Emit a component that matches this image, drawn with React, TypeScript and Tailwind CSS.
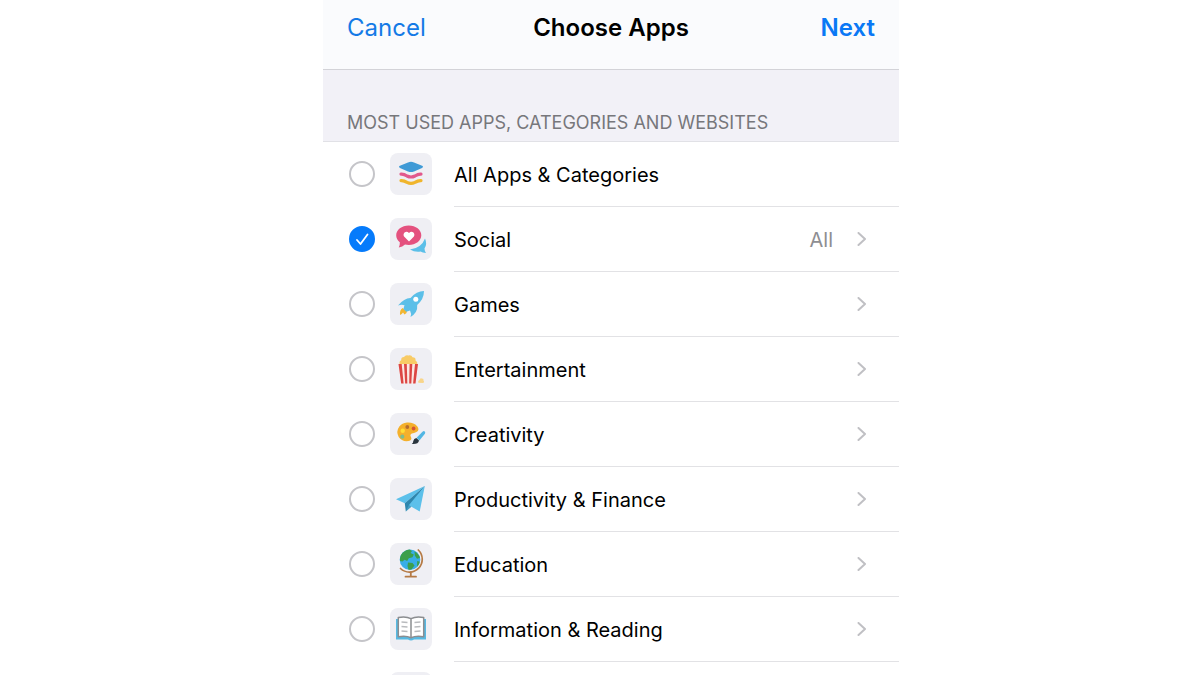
import React, { useState } from 'react';

const LayersIcon = () => (
  <svg viewBox="0 0 42 42" className="w-full h-full">
    <path d="M11 27.6 Q14 27.4 17 29.4 Q21 31.4 25 29.4 Q28 27.4 31 27.6" fill="none" stroke="#f0b52c" strokeWidth="3.2" strokeLinecap="round" />
    <path d="M11 21.2 Q14 21 17 23 Q21 25 25 23 Q28 21 31 21.2" fill="none" stroke="#e2588c" strokeWidth="3.2" strokeLinecap="round" />
    <path d="M9 13.8 Q9 13 10.5 12.6 L18 9.4 Q21 8 24 9.4 L31.5 12.6 Q33 13 33 13.8 Q33 14.6 31.5 15.2 L24 18.4 Q21 19.8 18 18.4 L10.500 15.2 Q9 14.6 9 13.8Z" fill="#3f9ad6" />
  </svg>
);

const SocialIcon = () => (
  <svg viewBox="0 0 42 42" className="w-full h-full">
    <path d="M35 20.500 Q37.500 26 34.500 30.500 Q34.500 33 36 35 Q32.500 34.800 30.500 33.500 Q25 34.500 20 31.500 Q31.500 30 35 20.500Z" fill="#5bbfe8" />
    <path d="M18.700 7.500 C25.800 7.500 31.300 11.800 31.300 17.300 C31.300 22.800 25.800 27 18.700 27 Q16.800 27 15 26.600 Q12.500 29 8.800 29.600 Q10 27.400 9.800 24.300 Q6.200 21.400 6.200 17.300 C6.200 11.800 11.800 7.500 18.700 7.500Z" fill="#e4527f" />
    <path d="M19 23.400 L14.300 18.700 C12 15.800 15.800 11.600 19 15 C22.200 11.600 26 15.800 23.700 18.700Z" fill="#fff" />
  </svg>
);

const RocketIcon = () => (
  <svg viewBox="0 0 42 42" className="w-full h-full">
    <path d="M12.500 25 Q9.500 27 10 32 Q12 31 13 29.500 L14.500 31.500 Q16.800 30.500 17 28.500Z" fill="#f2b632" />
    <path d="M34 8 Q26.500 8 20.500 15 Q14.500 14.800 8 22.500 Q11.500 21.300 14.500 22.200 L13.400 26 L16.300 28.800 L20 27.500 Q21.800 30.500 20.500 34 Q28 29.500 27.200 22 Q34 16 34 8Z" fill="#5bbfe8" />
    <circle cx="25.800" cy="16.200" r="2.500" fill="#fff" />
  </svg>
);

const PopcornIcon = () => (
  <svg viewBox="0 0 42 42" className="w-full h-full">
    <path d="M10 17 Q8.500 13.500 11.200 12.200 Q11 9 14 9 Q15.500 6.500 18.500 7.500 Q21.500 6.700 22.500 9.200 Q26 9.300 25.500 12.400 Q28.300 14 26.700 17Z" fill="#f8cb66" />
    <path d="M8.500 16 H28 L25.500 35.500 H11.200Z" fill="#fbe7e3" />
    <path d="M8.500 16 H11.700 L13.600 35.500 H11.200Z M14 16 H16.800 L17.300 35.500 H15.200Z M19.600 16 H22.300 L21.300 35.500 H19.200Z M25 16 H28 L25.500 35.500 H23.100Z" fill="#dc4644" />
    <path d="M28.300 34.800 Q27.500 32.800 29.500 32 Q30 29.500 32 30.500 Q34 30.500 33.500 32.500 Q35 34.800 32.500 35Z" fill="#f8d58b" />
  </svg>
);

const PaletteIcon = () => (
  <svg viewBox="0 0 42 42" className="w-full h-full">
    <path d="M17 9.500 Q23.500 9 27.200 13.200 Q30 17 26.500 19 Q24 20 21.800 20.500 Q19.500 21.800 21 24 Q22.500 27 18.500 28 Q12 29 8.700 24 Q5.700 18.500 9.300 13.500 Q12 10 17 9.500Z" fill="#f4b02c" />
    <circle cx="12.700" cy="17.800" r="2.200" fill="#ffdd35" />
    <circle cx="12.300" cy="23.700" r="2.100" fill="#7fbd8c" />
    <circle cx="17.300" cy="14" r="1.900" fill="#b56c30" />
    <circle cx="23.600" cy="15.500" r="1.900" fill="#d55335" />
    <path d="M34.500 18.300 Q35.800 19.500 34.900 20.800 L29.400 27.400 L26.600 24.800 L32.500 18.800 Q33.700 17.700 34.500 18.300Z" fill="#51b6e3" />
    <path d="M26.300 25 L29 27.500 Q28.500 31.500 21.800 31 Q23.300 30 23.300 28 Q23.800 25.300 26.300 25Z" fill="#29343d" />
  </svg>
);

const PlaneIcon = () => (
  <svg viewBox="0 0 42 42" className="w-full h-full">
    <path d="M34.800 8 L6 21.300 L14.800 25.300Z" fill="#5cc0ea" />
    <path d="M34.800 8 L14.800 25.300 L15.800 33.500 L20.500 28.500Z" fill="#2e86ad" />
    <path d="M34.800 8 L18.800 27.200 L29.700 33.500Z" fill="#5cc0ea" />
    <path d="M18.800 27.200 L21.500 28.800 L15.800 33.500Z" fill="#449fc5" />
  </svg>
);

const GlobeIcon = () => (
  <svg viewBox="0 0 42 42" className="w-full h-full">
    <path d="M28.300 7 A12.800 12.800 0 1 1 10.500 25.500" fill="none" stroke="#b57a45" strokeWidth="1.700" strokeLinecap="round" />
    <path d="M20.800 29.500 V33.500 M15.500 33.700 H26" fill="none" stroke="#b57a45" strokeWidth="1.800" strokeLinecap="round" />
    <circle cx="20" cy="16.800" r="10.300" fill="#38aee6" />
    <path d="M11 12 Q14 7 19.500 6.500 L22 8 L20.500 10 L23.800 11.500 L22.500 14.200 L18.800 15.200 L17.200 18 L14.500 16.800 L12.500 18.500 L10 18 Q9.700 14.500 11 12Z" fill="#3c9f4c" />
    <path d="M24.500 8.500 Q29 11 30 15 L27 15.800 L24.800 12.500Z M18 19.500 L22.500 20 L24.500 22.500 L21.500 26.500 L18.500 26.800 L17.500 23Z M27.200 18 L29.800 18.800 Q29 22 27 23.500Z" fill="#3c9f4c" />
  </svg>
);

const BookIcon = () => (
  <svg viewBox="0 0 42 42" className="w-full h-full">
    <path d="M6 11 H36 V31.500 H24 Q21 33.500 18 31.500 H6Z" fill="#57b9e2" />
    <path d="M8.300 9.500 Q16 8 21 10.700 V29.700 Q16 27.300 8.300 28.700Z M33.700 9.500 Q26 8 21 10.700 V29.700 Q26 27.300 33.700 28.700Z" fill="#fff" stroke="#8b8d90" strokeWidth="1.500" strokeLinejoin="round" />
    <path d="M11.500 14 L17.500 14.500 M11.500 18.500 L17.500 19 M11.500 23 L17.500 23.500 M24.500 14.500 L30.500 14 M24.500 19 L30.500 18.500 M24.500 23.500 L30.500 23" stroke="#b9bbbe" strokeWidth="1.300" />
  </svg>
);

type Category = {
  id: string;
  name: string;
  icon?: React.ReactNode;
  expandable: boolean;
};

const categories: Category[] = [
  { id: 'all', name: 'All Apps & Categories', icon: <LayersIcon />, expandable: false },
  { id: 'social', name: 'Social', icon: <SocialIcon />, expandable: true },
  { id: 'games', name: 'Games', icon: <RocketIcon />, expandable: true },
  { id: 'entertainment', name: 'Entertainment', icon: <PopcornIcon />, expandable: true },
  { id: 'creativity', name: 'Creativity', icon: <PaletteIcon />, expandable: true },
  { id: 'productivity', name: 'Productivity & Finance', icon: <PlaneIcon />, expandable: true },
  { id: 'education', name: 'Education', icon: <GlobeIcon />, expandable: true },
  { id: 'reading', name: 'Information & Reading', icon: <BookIcon />, expandable: true },
];

const App: React.FC = () => {
  const [selected, setSelected] = useState<string[]>(['social']);

  const toggle = (id: string) => {
    setSelected(selected.includes(id) ? selected.filter((s) => s !== id) : [...selected, id]);
  };

  return (
    <div className="h-screen overflow-hidden bg-white pl-[22px] font-['Inter',sans-serif] text-black">
      <div className="max-w-xl mx-auto">
        {/* Navigation bar */}
        <header className="grid grid-cols-[1fr_auto_1fr] items-center h-[70px] px-6 pb-3.5 bg-[#fafbfd] border-b border-[#d3d3d8] text-2xl leading-8">
          <button className="justify-self-start text-[#147ae6]">Cancel</button>
          <h1 className="font-semibold">Choose Apps</h1>
          <button className="justify-self-end font-semibold text-[#0a78f5]">Next</button>
        </header>

        <h2 className="flex items-end h-[72px] px-6 pb-1.5 bg-[#f2f1f7] border-b border-[#e1e1e6] text-lg leading-6 text-[#77777b]">
          MOST USED APPS, CATEGORIES AND WEBSITES
        </h2>

        {/* Category list */}
        <ul>
          {categories.map((category) => (
            <li key={category.id} className="flex items-center h-[65px] pl-[26px]">
              <span className="relative flex mb-0.5 mr-[15px]">
                <input
                  id={category.id}
                  type="checkbox"
                  checked={selected.includes(category.id)}
                  onChange={() => toggle(category.id)}
                  className="peer appearance-none w-[26px] h-[26px] rounded-full border-2 border-[#c5c5c9] checked:border-[#067bfb] checked:bg-[#067bfb]"
                />
                <svg viewBox="0 0 26 26" className="absolute inset-0 hidden pointer-events-none peer-checked:block">
                  <path d="M8 14 L11.500 18 L18.500 8.500" fill="none" stroke="#fff" strokeWidth="1.800" strokeLinecap="round" strokeLinejoin="round" />
                </svg>
              </span>
              <span className="w-[42px] h-[42px] mb-0.5 mr-[22px] rounded-lg bg-[#efeff4]">{category.icon}</span>
              <div className="flex flex-1 items-center h-full pr-8 border-b border-[#e2e2e5] text-xl leading-7">
                <label htmlFor={category.id} className="flex-1 pt-0.5">
                  {category.name}
                </label>
                {category.expandable && (
                  <button aria-label={`Show ${category.name}`} className="flex items-center gap-6 text-[#8e8e92]">
                    {selected.includes(category.id) && <span className="pt-0.5">All</span>}
                    <svg viewBox="0 0 10 14" className="w-[10px] h-[14px]">
                      <path d="M1.500 1 L8 7 L1.500 13" fill="none" stroke="#c0c0c4" strokeWidth="2" strokeLinecap="round" strokeLinejoin="round" />
                    </svg>
                  </button>
                )}
              </div>
            </li>
          ))}
          <li className="flex pt-[10px] pl-[67px]">
            <span className="w-[42px] h-[42px] rounded-lg bg-[#efeff4]" />
          </li>
        </ul>
      </div>
    </div>
  );
};

export default App;
